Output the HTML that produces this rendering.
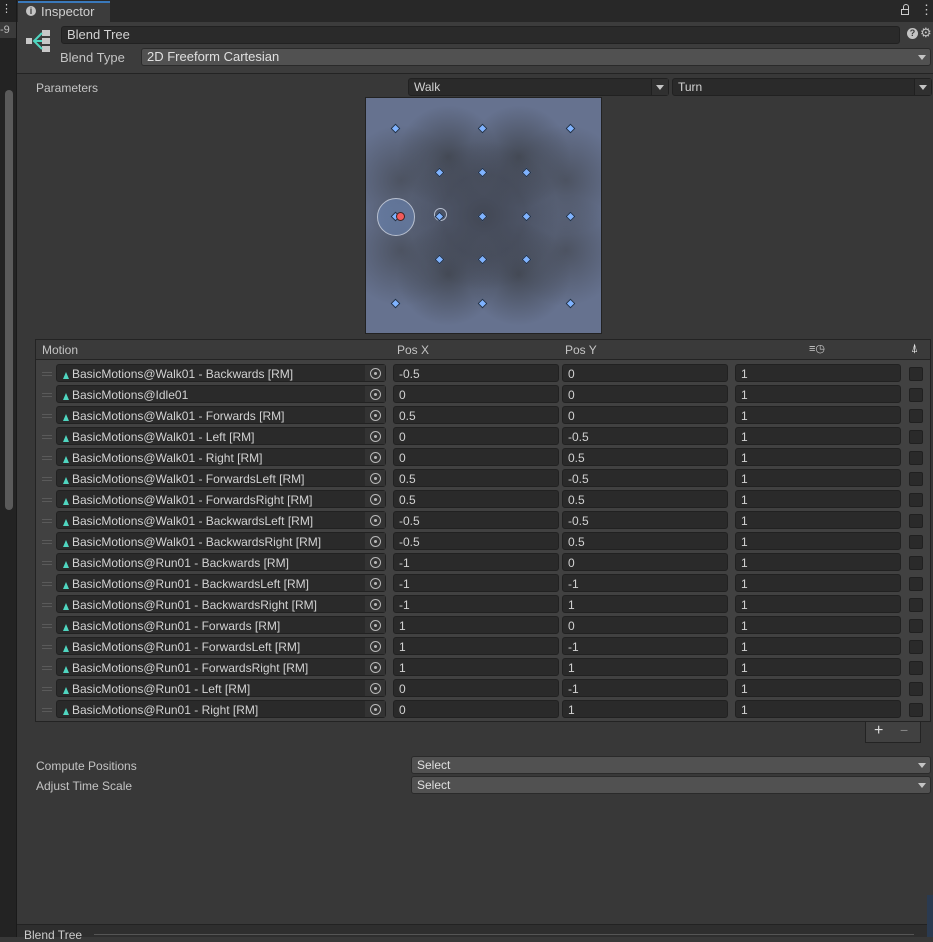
<!DOCTYPE html>
<html><head><style>
*{box-sizing:border-box;margin:0;padding:0}
body{width:933px;height:937px;background:#383838;font-family:"Liberation Sans",sans-serif;font-size:12px;color:#c4c4c4;position:relative;overflow:hidden}
.a{position:absolute}
.fld{position:absolute;height:18px;background:#2a2a2a;border:1px solid #212121;border-radius:3px;padding-left:5px;line-height:18px;color:#d2d2d2}
.dd{position:absolute;height:18px;background:#515151;border:1px solid #2a2a2a;border-radius:3px;padding-left:5px;line-height:16px;color:#e0e0e0}
.arr{position:absolute;right:4px;top:6px;width:0;height:0;border-left:4px solid transparent;border-right:4px solid transparent;border-top:5px solid #c4c4c4}
.pt{position:absolute;width:7px;height:7px;background:#7fb3ff;border:1px solid #263040;transform:rotate(45deg);margin:-3px 0 0 -3px}
.row{position:absolute;left:36px;width:894px;height:21px}
.hd{position:absolute;left:6px;top:8px;width:10px;height:4px;border-top:1px solid #5a5a5a;border-bottom:1px solid #5a5a5a}
.cb{position:absolute;left:873px;top:3px;width:14px;height:14px;background:#2a2a2a;border:1px solid #202020;border-radius:2px}
.tgt{position:absolute;right:4px;top:3px;width:11px;height:11px;border:1px solid #b8b8b8;border-radius:50%}
.tgt:after{content:"";position:absolute;left:3px;top:3px;width:3px;height:3px;background:#b8b8b8;border-radius:50%}
.ic{display:inline-block;width:0;height:0;border-left:3px solid transparent;border-right:3px solid transparent;border-bottom:7px solid #4fd6c0;margin:0 3px 0 4px;vertical-align:-1px}
</style></head><body>
<div class="a" style="left:0;top:0;width:17px;height:937px;background:#232323;border-right:1px solid #1a1a1a"></div>
<div class="a" style="left:0;top:22px;width:16px;height:16px;background:#3a3a3a;color:#bbb;font-size:11px;line-height:16px">-9</div>
<div class="a" style="left:5px;top:90px;width:8px;height:420px;background:#5a5a5a;border-radius:4px"></div>
<div class="a" style="left:1px;top:2px;color:#ccc;font-size:11px">⋮</div>
<div class="a" style="left:17px;top:0;width:916px;height:22px;background:#282828"></div>
<div class="a" style="left:18px;top:1px;width:92px;height:21px;background:#3c3c3c;border-top:2px solid #3a79bb"></div>
<div class="a" style="left:26px;top:6px;width:10px;height:10px;border-radius:50%;background:#c4c4c4;color:#3c3c3c;font-size:9px;font-weight:bold;text-align:center;line-height:10px">i</div>
<div class="a" style="left:41px;top:4px;color:#d0d0d0;font-size:13px">Inspector</div>
<div class="a" style="left:901px;top:9px;width:8px;height:6px;border:1px solid #ccc"></div>
<div class="a" style="left:903px;top:4px;width:6px;height:6px;border:1px solid #ccc;border-bottom:none;border-radius:3px 3px 0 0"></div>
<div class="a" style="left:920px;top:2px;color:#ccc;font-size:13px">⋮</div>
<div class="a" style="left:17px;top:22px;width:916px;height:52px;background:#3c3c3c;border-bottom:1px solid #232323"></div>
<svg class="a" style="left:26px;top:29px" width="26" height="26"><rect x="0" y="9" width="6" height="6" fill="#c8c8c8"/><rect x="16" y="1" width="8" height="6" fill="#c8c8c8"/><rect x="16" y="9" width="8" height="6" fill="#c8c8c8"/><rect x="16" y="17" width="8" height="6" fill="#c8c8c8"/><path d="M16 4 L8 12 L16 20 M8 12 H16" stroke="#4fd6c0" stroke-width="2" fill="none"/></svg>
<div class="fld" style="left:61px;top:26px;width:839px;height:18px;font-size:13px;line-height:16px">Blend Tree</div>
<div class="a" style="left:907px;top:28px;width:11px;height:11px;border-radius:50%;background:#c4c4c4;color:#3c3c3c;font-size:9px;font-weight:bold;text-align:center;line-height:11px">?</div>
<div class="a" style="left:920px;top:25px;color:#c4c4c4;font-size:13px">⚙</div>
<div class="a" style="left:60px;top:50px;font-size:13px">Blend Type</div>
<div class="dd" style="left:141px;top:48px;width:790px;font-size:13px">2D Freeform Cartesian<div class="arr"></div></div>
<div class="a" style="left:36px;top:81px;font-size:12px">Parameters</div>
<div class="fld" style="left:408px;top:78px;width:261px;line-height:17px">Walk<div style="position:absolute;right:0;top:0;width:17px;height:16px;border-left:1px solid #202020;background:#303030"><div class="arr" style="right:4px"></div></div></div>
<div class="fld" style="left:672px;top:78px;width:260px;line-height:17px">Turn<div style="position:absolute;right:0;top:0;width:17px;height:16px;border-left:1px solid #202020;background:#303030"><div class="arr" style="right:4px"></div></div></div>
<div class="a" style="left:365px;top:97px;width:237px;height:237px;border:1px solid #222;background:
radial-gradient(circle at 50% 50%,rgba(60,64,74,.85) 0,rgba(60,64,74,.6) 25%,rgba(0,0,0,0) 45%),
radial-gradient(circle at 35% 25%,rgba(65,70,80,.9) 0,rgba(0,0,0,0) 22%),
radial-gradient(circle at 65% 25%,rgba(65,70,80,.9) 0,rgba(0,0,0,0) 22%),
radial-gradient(circle at 35% 75%,rgba(65,70,80,.9) 0,rgba(0,0,0,0) 22%),
radial-gradient(circle at 65% 75%,rgba(65,70,80,.9) 0,rgba(0,0,0,0) 22%),
radial-gradient(circle at 15% 35%,rgba(70,75,86,.8) 0,rgba(0,0,0,0) 22%),
radial-gradient(circle at 85% 35%,rgba(70,75,86,.8) 0,rgba(0,0,0,0) 22%),
radial-gradient(circle at 15% 65%,rgba(70,75,86,.8) 0,rgba(0,0,0,0) 22%),
radial-gradient(circle at 85% 65%,rgba(70,75,86,.8) 0,rgba(0,0,0,0) 22%),
#66728f">
<div class="a" style="left:11px;top:100px;width:38px;height:38px;border-radius:50%;border:1px solid #b8c0d0;background:rgba(110,140,190,.5)"></div>
<div class="a" style="left:68px;top:110px;width:13px;height:13px;border-radius:50%;border:1px solid #b8c0d0"></div>
</div>
<div class="pt" style="left:395px;top:128px"></div><div class="pt" style="left:482px;top:128px"></div><div class="pt" style="left:570px;top:128px"></div>
<div class="pt" style="left:439px;top:172px"></div><div class="pt" style="left:482px;top:172px"></div><div class="pt" style="left:526px;top:172px"></div>
<div class="pt" style="left:395px;top:216px"></div><div class="pt" style="left:439px;top:216px"></div><div class="pt" style="left:482px;top:216px"></div><div class="pt" style="left:526px;top:216px"></div><div class="pt" style="left:570px;top:216px"></div>
<div class="pt" style="left:439px;top:259px"></div><div class="pt" style="left:482px;top:259px"></div><div class="pt" style="left:526px;top:259px"></div>
<div class="pt" style="left:395px;top:303px"></div><div class="pt" style="left:482px;top:303px"></div><div class="pt" style="left:570px;top:303px"></div>
<div class="a" style="left:396px;top:212px;width:9px;height:9px;border-radius:50%;background:#f25a5a;border:1px solid #402020"></div>
<div class="a" style="left:35px;top:339px;width:896px;height:383px;border:1px solid #232323;background:#414141"></div>
<div class="a" style="left:36px;top:340px;width:894px;height:20px;background:#3a3a3a;border-bottom:1px solid #232323"></div>
<div class="a" style="left:42px;top:343px">Motion</div>
<div class="a" style="left:397px;top:343px">Pos X</div>
<div class="a" style="left:565px;top:343px">Pos Y</div>
<div class="a" style="left:809px;top:342px;font-size:11px;color:#ccc">≡◷</div>
<div class="a" style="left:911px;top:341px;color:#eee;font-size:12px">⍋</div>
<div id="rows"></div>
<div class="a" style="left:865px;top:722px;width:56px;height:21px;background:#414141;border:1px solid #232323;border-top:none"></div>
<div class="a" style="left:874px;top:722px;font-size:16px;color:#ddd">+</div>
<div class="a" style="left:900px;top:722px;font-size:14px;color:#888">−</div>
<div class="a" style="left:36px;top:759px">Compute Positions</div>
<div class="dd" style="left:411px;top:756px;width:520px">Select<div class="arr"></div></div>
<div class="a" style="left:36px;top:779px">Adjust Time Scale</div>
<div class="dd" style="left:411px;top:776px;width:520px">Select<div class="arr"></div></div>
<div class="a" style="left:17px;top:924px;width:916px;height:13px;background:#2e2e2e;border-top:1px solid #222"></div>
<div class="a" style="left:24px;top:928px;font-size:12px;color:#ccc">Blend Tree</div>
<div class="a" style="left:94px;top:934px;width:820px;height:1px;background:#555"></div>
<div class="a" style="left:927px;top:895px;width:6px;height:42px;background:#2a3a50"></div>
<script>
var d=[["Walk01 - Backwards [RM]","-0.5","0"],["Idle01","0","0"],["Walk01 - Forwards [RM]","0.5","0"],["Walk01 - Left [RM]","0","-0.5"],["Walk01 - Right [RM]","0","0.5"],["Walk01 - ForwardsLeft [RM]","0.5","-0.5"],["Walk01 - ForwardsRight [RM]","0.5","0.5"],["Walk01 - BackwardsLeft [RM]","-0.5","-0.5"],["Walk01 - BackwardsRight [RM]","-0.5","0.5"],["Run01 - Backwards [RM]","-1","0"],["Run01 - BackwardsLeft [RM]","-1","-1"],["Run01 - BackwardsRight [RM]","-1","1"],["Run01 - Forwards [RM]","1","0"],["Run01 - ForwardsLeft [RM]","1","-1"],["Run01 - ForwardsRight [RM]","1","1"],["Run01 - Left [RM]","0","-1"],["Run01 - Right [RM]","0","1"]];
var h="";
d.forEach(function(r,i){var t=364+i*21;
h+='<div class="row" style="top:'+t+'px"><div class="hd"></div>'+
'<div class="fld" style="left:20px;top:0;width:330px;padding-left:2px"><span class="ic"></span>BasicMotions@'+r[0]+'<div style="position:absolute;right:0;top:0;width:20px;height:16px;background:#333"><div class="tgt"></div></div></div>'+
'<div class="fld" style="left:357px;top:0;width:166px">'+r[1]+'</div>'+
'<div class="fld" style="left:526px;top:0;width:166px">'+r[2]+'</div>'+
'<div class="fld" style="left:699px;top:0;width:166px">1</div><div class="cb"></div></div>';});
document.getElementById("rows").outerHTML=h;
</script>
</body></html>
